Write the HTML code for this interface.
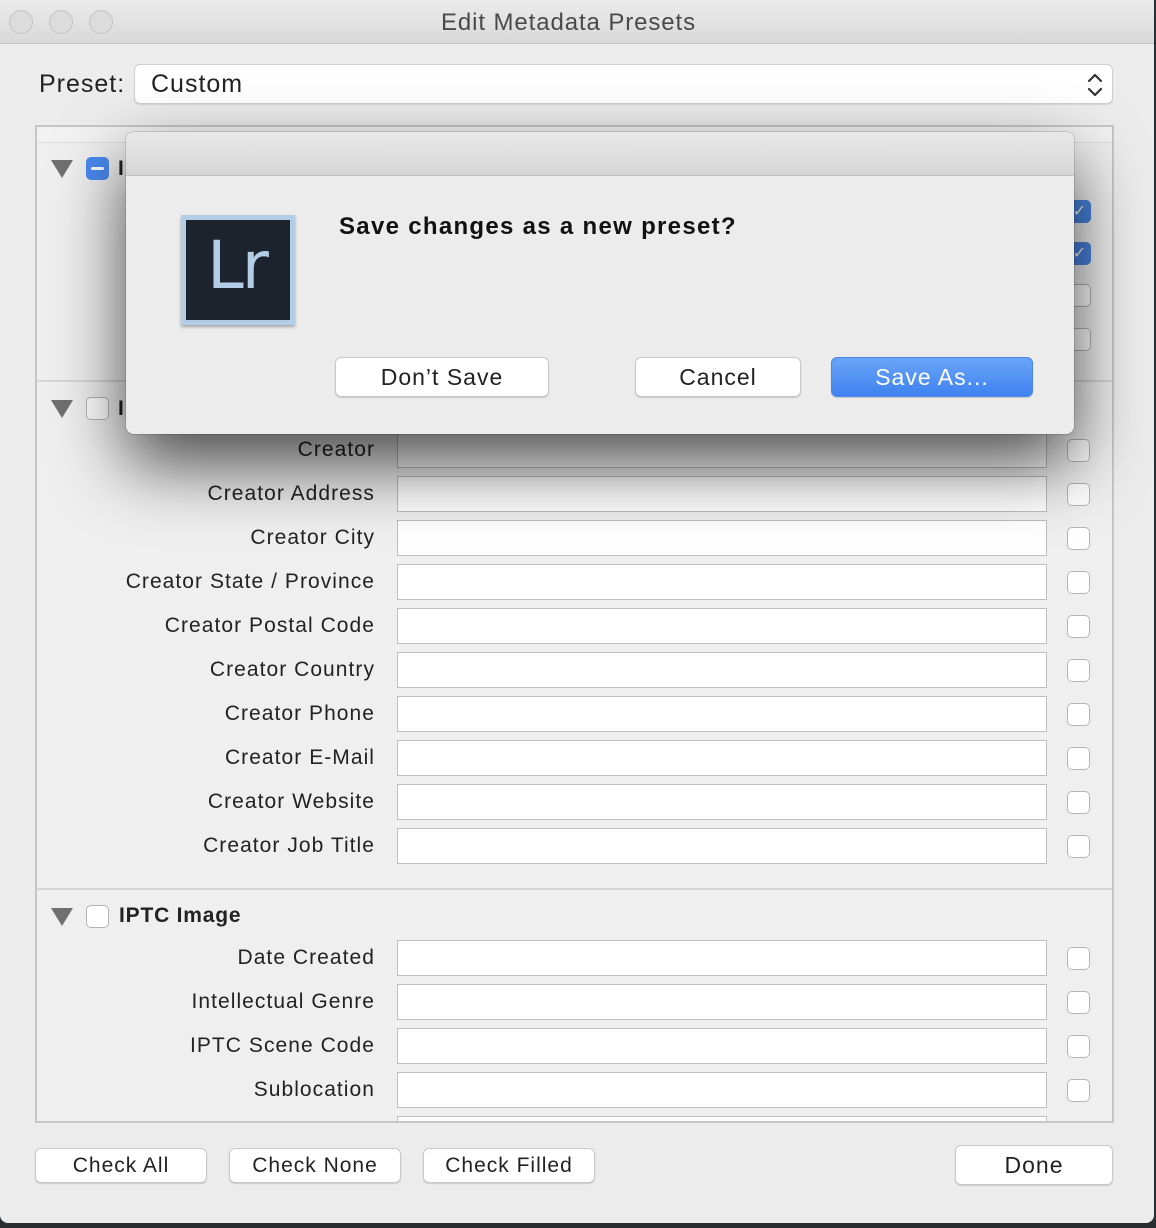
<!DOCTYPE html>
<html><head><meta charset="utf-8"><style>
*{box-sizing:border-box;margin:0;padding:0}
body{width:1156px;height:1228px;background:#2a2d30;font-family:"Liberation Sans",sans-serif;position:relative;overflow:hidden;color:#222}
.win{position:absolute;left:0;top:0;width:1154px;height:1223px;background:#ececec;border-radius:0 0 8px 8px;overflow:hidden}
.tb{position:absolute;left:0;top:0;width:100%;height:44px;background:linear-gradient(#ebebeb,#d9d9d9);border-bottom:1px solid #c2c2c2}
.tl{position:absolute;top:10px;width:24px;height:24px;border-radius:50%;background:#dcdcdc;border:1px solid #c4c4c4}
.title{position:absolute;top:9px;width:100%;text-align:center;font-size:24px;color:#4a4a4a;letter-spacing:0.8px;padding-left:-8px}
.abs{position:absolute}
.pop{left:134px;top:64px;width:979px;height:40px;background:#fff;border:1px solid #cfcfcf;border-radius:6px;box-shadow:0 1px 1px rgba(0,0,0,.1);font-size:25px;padding:5px 16px;letter-spacing:1px}
.panel{left:35px;top:125px;width:1079px;height:998px;border:2px solid #c6c6c6;background:#efefef;overflow:hidden}
.lab{position:absolute;width:340px;left:35px;text-align:right;font-size:21px;color:#222;letter-spacing:1.05px;top:2px}
.fld{position:absolute;left:397px;width:650px;height:36px;background:#fff;border:1.5px solid #bdbdbd}
.cb{position:absolute;width:23px;height:23px;border:1.5px solid #b5b5b5;border-radius:5px;background:#fff}
.tri{position:absolute;width:0;height:0;border-left:11px solid transparent;border-right:11px solid transparent;border-top:18px solid #707070}
.btn{position:absolute;background:#fff;border:1px solid #c8c8c8;border-radius:6px;box-shadow:0 1px 1px rgba(0,0,0,.15);text-align:center;font-size:21px;color:#222;letter-spacing:1px}
.dlg{position:absolute;left:126px;top:132px;width:948px;height:302px;background:#ececec;border-radius:8px;box-shadow:0 30px 70px rgba(0,0,0,.7),0 0 0 1px rgba(0,0,0,.12);overflow:hidden}
.dtb{height:44px;background:linear-gradient(#e8e8e8,#d6d6d6);border-bottom:1px solid #c0c0c0}
</style></head><body>
<div class="win">
<div class="tb"></div>
<div class="tl" style="left:9px"></div><div class="tl" style="left:49px"></div><div class="tl" style="left:89px"></div>
<div class="abs" style="left:441px;top:9px;font-size:24px;color:#4a4a4a;letter-spacing:0.9px">Edit Metadata Presets</div>
<div class="abs" style="left:39px;top:70px;font-size:25px;color:#222;letter-spacing:1px">Preset:</div>
<div class="abs pop">Custom
<svg style="position:absolute;right:8px;top:6px" width="18" height="28" viewBox="0 0 18 28"><path d="M3 10 L9 4 L15 10 M3 18 L9 24 L15 18" fill="none" stroke="#333" stroke-width="2.2" stroke-linecap="round" stroke-linejoin="round"/></svg></div>
<div class="abs panel">
<div class="abs" style="left:0;top:0;width:100%;height:16px;background:#f2f2f2;border-bottom:1px solid #ddd"></div>
<div class="tri" style="left:14px;top:33px"></div>
<div class="abs" style="left:49px;top:30px;width:23px;height:23px;border-radius:5px;background:#4a8af0"><div style="position:absolute;left:5px;top:10px;width:13px;height:3px;background:#fff;border-radius:2px"></div></div>
<div class="abs" style="left:81px;top:30px;font-size:21px;font-weight:bold">I</div>
<div class="abs" style="left:1031px;top:73px;width:23px;height:23px;border-radius:5px;background:#4a85e0;color:#fff;font-size:16px;text-align:center;line-height:23px">✓</div>
<div class="abs" style="left:1031px;top:115px;width:23px;height:23px;border-radius:5px;background:#4a85e0;color:#fff;font-size:16px;text-align:center;line-height:23px">✓</div>
<div class="cb" style="left:1031px;top:157px"></div>
<div class="cb" style="left:1031px;top:201px"></div>
<div class="abs" style="left:0;top:253px;width:100%;height:2px;background:#d6d6d6"></div>
<div class="tri" style="left:14px;top:273px"></div>
<div class="cb" style="left:49px;top:270px"></div>
<div class="abs" style="left:81px;top:270px;font-size:21px;font-weight:bold">I</div>
<div class="abs" style="left:0;top:761px;width:100%;height:2px;background:#d6d6d6"></div>
<div class="tri" style="left:14px;top:781px"></div>
<div class="cb" style="left:49px;top:778px"></div>
<div class="abs" style="left:82px;top:777px;font-size:21px;font-weight:bold;letter-spacing:0.8px">IPTC Image</div>
</div>
<div class="lab" style="top:438px">Creator</div><div class="fld" style="top:432px"></div><div class="cb" style="left:1067px;top:439px"></div>
<div class="lab" style="top:482px">Creator Address</div><div class="fld" style="top:476px"></div><div class="cb" style="left:1067px;top:483px"></div>
<div class="lab" style="top:526px">Creator City</div><div class="fld" style="top:520px"></div><div class="cb" style="left:1067px;top:527px"></div>
<div class="lab" style="top:570px">Creator State / Province</div><div class="fld" style="top:564px"></div><div class="cb" style="left:1067px;top:571px"></div>
<div class="lab" style="top:614px">Creator Postal Code</div><div class="fld" style="top:608px"></div><div class="cb" style="left:1067px;top:615px"></div>
<div class="lab" style="top:658px">Creator Country</div><div class="fld" style="top:652px"></div><div class="cb" style="left:1067px;top:659px"></div>
<div class="lab" style="top:702px">Creator Phone</div><div class="fld" style="top:696px"></div><div class="cb" style="left:1067px;top:703px"></div>
<div class="lab" style="top:746px">Creator E-Mail</div><div class="fld" style="top:740px"></div><div class="cb" style="left:1067px;top:747px"></div>
<div class="lab" style="top:790px">Creator Website</div><div class="fld" style="top:784px"></div><div class="cb" style="left:1067px;top:791px"></div>
<div class="lab" style="top:834px">Creator Job Title</div><div class="fld" style="top:828px"></div><div class="cb" style="left:1067px;top:835px"></div>
<div class="lab" style="top:946px">Date Created</div><div class="fld" style="top:940px"></div><div class="cb" style="left:1067px;top:947px"></div>
<div class="lab" style="top:990px">Intellectual Genre</div><div class="fld" style="top:984px"></div><div class="cb" style="left:1067px;top:991px"></div>
<div class="lab" style="top:1034px">IPTC Scene Code</div><div class="fld" style="top:1028px"></div><div class="cb" style="left:1067px;top:1035px"></div>
<div class="lab" style="top:1078px">Sublocation</div><div class="fld" style="top:1072px"></div><div class="cb" style="left:1067px;top:1079px"></div>
<div class="fld" style="top:1116px;height:5px;border-bottom:none"></div>
<div class="btn" style="left:35px;top:1148px;width:172px;height:35px;line-height:33px">Check All</div>
<div class="btn" style="left:229px;top:1148px;width:172px;height:35px;line-height:33px">Check None</div>
<div class="btn" style="left:423px;top:1148px;width:172px;height:35px;line-height:33px">Check Filled</div>
<div class="btn" style="left:955px;top:1145px;width:158px;height:40px;line-height:38px;font-size:23px">Done</div>
<div class="dlg"><div class="dtb"></div>
<div class="abs" style="left:55px;top:83px;width:114px;height:110px;background:#b3cde6;box-shadow:0 2px 3px rgba(0,0,0,.3)">
<div style="position:absolute;left:5px;top:5px;width:104px;height:100px;background:#1c232d"></div>
<div style="position:absolute;left:26px;top:12px;font-size:66px;color:#b3cde6;font-family:'DejaVu Sans',sans-serif;letter-spacing:-2px">Lr</div></div>
<div class="abs" style="left:213px;top:81px;font-size:24px;font-weight:bold;color:#111;letter-spacing:1.3px">Save changes as a new preset?</div>
<div class="btn" style="left:209px;top:225px;width:214px;height:40px;line-height:38px;font-size:23px">Don’t Save</div>
<div class="btn" style="left:509px;top:225px;width:166px;height:40px;line-height:38px;font-size:23px">Cancel</div>
<div class="btn" style="left:705px;top:225px;width:202px;height:40px;line-height:38px;font-size:23px;background:linear-gradient(#6aa5f8,#3f82f0);border-color:#4a86ea;color:#fff">Save As...</div>
</div>
</div>
</body></html>
